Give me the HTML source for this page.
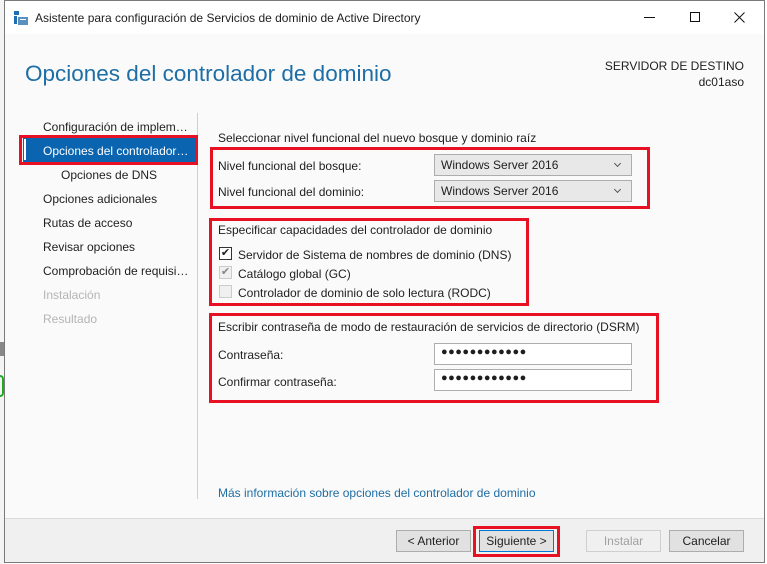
<!DOCTYPE html>
<html><head><meta charset="utf-8"><style>
*{margin:0;padding:0;box-sizing:border-box}
body{width:767px;height:564px;background:#fff;font-family:"Liberation Sans",sans-serif;font-size:12px;color:#1e1e1e;position:relative;overflow:hidden}
.a{position:absolute;white-space:nowrap}
.red{position:absolute;border:3px solid #e81123}
.combo{position:absolute;background:#e8e8e8;border:1px solid #adadad;padding:3px 6px;font-size:12px}
.combo:after{content:"";position:absolute;right:11px;top:6px;width:4px;height:4px;border-right:1px solid #555;border-bottom:1px solid #555;transform:rotate(45deg)}
.inp{position:absolute;background:#fff;border:1px solid #adadad;padding:2px 6px;font-size:11px;letter-spacing:0.5px}
.btn{position:absolute;background:#e1e1e1;border:1px solid #adadad;text-align:center;line-height:20px;font-size:12px}
.cb{position:absolute;width:13px;height:13px;border:1px solid #333;background:#fff;font-size:11px;line-height:11px;text-align:center}
.side{position:absolute;left:43px;color:#1e1e1e;font-size:12px}
</style></head><body>
<div class="a" style="left:0;top:0;width:5px;height:564px;background:#f4f4f4"></div>
<div class="a" style="left:0;top:342px;width:4px;height:14px;background:#888"></div>
<div class="a" style="left:0;top:375px;width:4px;height:22px;border:2px solid #2a2;border-left:none;border-radius:0 8px 8px 0"></div>
<div class="a" style="left:4px;top:0;width:761px;height:563px;border:1px solid #7a7a7a;background:#fafafa"></div>
<div class="a" style="left:5px;top:1px;width:759px;height:33px;background:#fff"></div>
<svg class="a" style="left:13px;top:10px" width="16" height="16"><rect x="1" y="1" width="5" height="4" fill="#1f6fb2"/><rect x="1" y="6" width="3" height="8" fill="#1f6fb2"/><rect x="5" y="7" width="10" height="8" fill="#5a90c0"/><rect x="7" y="9" width="6" height="1" fill="#fff"/></svg>
<div class="a" style="left:35px;top:11px;font-size:12px">Asistente para configuración de Servicios de dominio de Active Directory</div>
<div class="a" style="left:644px;top:17px;width:11px;height:1px;background:#111"></div>
<div class="a" style="left:690px;top:12px;width:10px;height:10px;border:1px solid #111"></div>
<svg class="a" style="left:734px;top:12px" width="11" height="11"><path d="M0.5 0.5L10.5 10.5M10.5 0.5L0.5 10.5" stroke="#111" stroke-width="1"/></svg>
<div class="a" style="left:25px;top:61px;font-size:22.5px;color:#1e6ea6">Opciones del controlador de dominio</div>
<div class="a" style="right:23px;top:58px;font-size:12px;text-align:right;line-height:16px">SERVIDOR DE DESTINO<br>dc01aso</div>
<div class="a" style="left:197px;top:113px;width:1px;height:386px;background:#d0d0d0"></div>
<div class="side" style="top:120px">Configuración de implem…</div>
<div class="a" style="left:23px;top:138px;width:172px;height:24px;background:#0a64b0"></div>
<div class="a" style="left:24px;top:139px;width:2px;height:21px;background:#fff"></div>
<div class="side" style="top:144px;color:#fff">Opciones del controlador…</div>
<div class="red" style="left:19px;top:135px;width:179px;height:30px"></div>
<div class="side" style="top:168px;left:61px">Opciones de DNS</div>
<div class="side" style="top:192px">Opciones adicionales</div>
<div class="side" style="top:216px">Rutas de acceso</div>
<div class="side" style="top:240px">Revisar opciones</div>
<div class="side" style="top:264px">Comprobación de requisi…</div>
<div class="side" style="top:288px;color:#b4b4b4">Instalación</div>
<div class="side" style="top:312px;color:#b4b4b4">Resultado</div>
<div class="a" style="left:218px;top:131px">Seleccionar nivel funcional del nuevo bosque y dominio raíz</div>
<div class="red" style="left:210px;top:147px;width:440px;height:62px"></div>
<div class="a" style="left:218px;top:159px">Nivel funcional del bosque:</div>
<div class="combo" style="left:434px;top:154px;width:198px;height:22px">Windows Server 2016</div>
<div class="a" style="left:218px;top:185px">Nivel funcional del dominio:</div>
<div class="combo" style="left:434px;top:180px;width:198px;height:22px">Windows Server 2016</div>
<div class="red" style="left:209px;top:218px;width:320px;height:88px"></div>
<div class="a" style="left:218px;top:223px">Especificar capacidades del controlador de dominio</div>
<div class="cb" style="left:219px;top:247px">✔</div>
<div class="a" style="left:238px;top:248px">Servidor de Sistema de nombres de dominio (DNS)</div>
<div class="cb" style="left:219px;top:266px;border-color:#ccc;background:#f0f0f0;color:#888">✔</div>
<div class="a" style="left:238px;top:267px">Catálogo global (GC)</div>
<div class="cb" style="left:219px;top:285px;border-color:#ccc;background:#f0f0f0"></div>
<div class="a" style="left:238px;top:286px">Controlador de dominio de solo lectura (RODC)</div>
<div class="red" style="left:209px;top:313px;width:450px;height:90px"></div>
<div class="a" style="left:218px;top:320px">Escribir contraseña de modo de restauración de servicios de directorio (DSRM)</div>
<div class="a" style="left:218px;top:348px">Contraseña:</div>
<div class="inp" style="left:434px;top:343px;width:198px;height:22px">●●●●●●●●●●●●</div>
<div class="a" style="left:218px;top:375px">Confirmar contraseña:</div>
<div class="inp" style="left:434px;top:369px;width:198px;height:22px">●●●●●●●●●●●●</div>
<div class="a" style="left:218px;top:486px;color:#1e6ea6">Más información sobre opciones del controlador de dominio</div>
<div class="a" style="left:5px;top:518px;width:759px;height:44px;background:#f0f0f0;border-top:1px solid #dadada"></div>
<div class="btn" style="left:396px;top:530px;width:75px;height:22px">&lt; Anterior</div>
<div class="btn" style="left:479px;top:530px;width:75px;height:22px;border-color:#0078d7">Siguiente &gt;</div>
<div class="red" style="left:473px;top:526px;width:87px;height:31px"></div>
<div class="btn" style="left:586px;top:530px;width:75px;height:22px;background:#f0f0f0;border-color:#cfcfcf;color:#a0a0a0">Instalar</div>
<div class="btn" style="left:669px;top:530px;width:75px;height:22px">Cancelar</div>
</body></html>
